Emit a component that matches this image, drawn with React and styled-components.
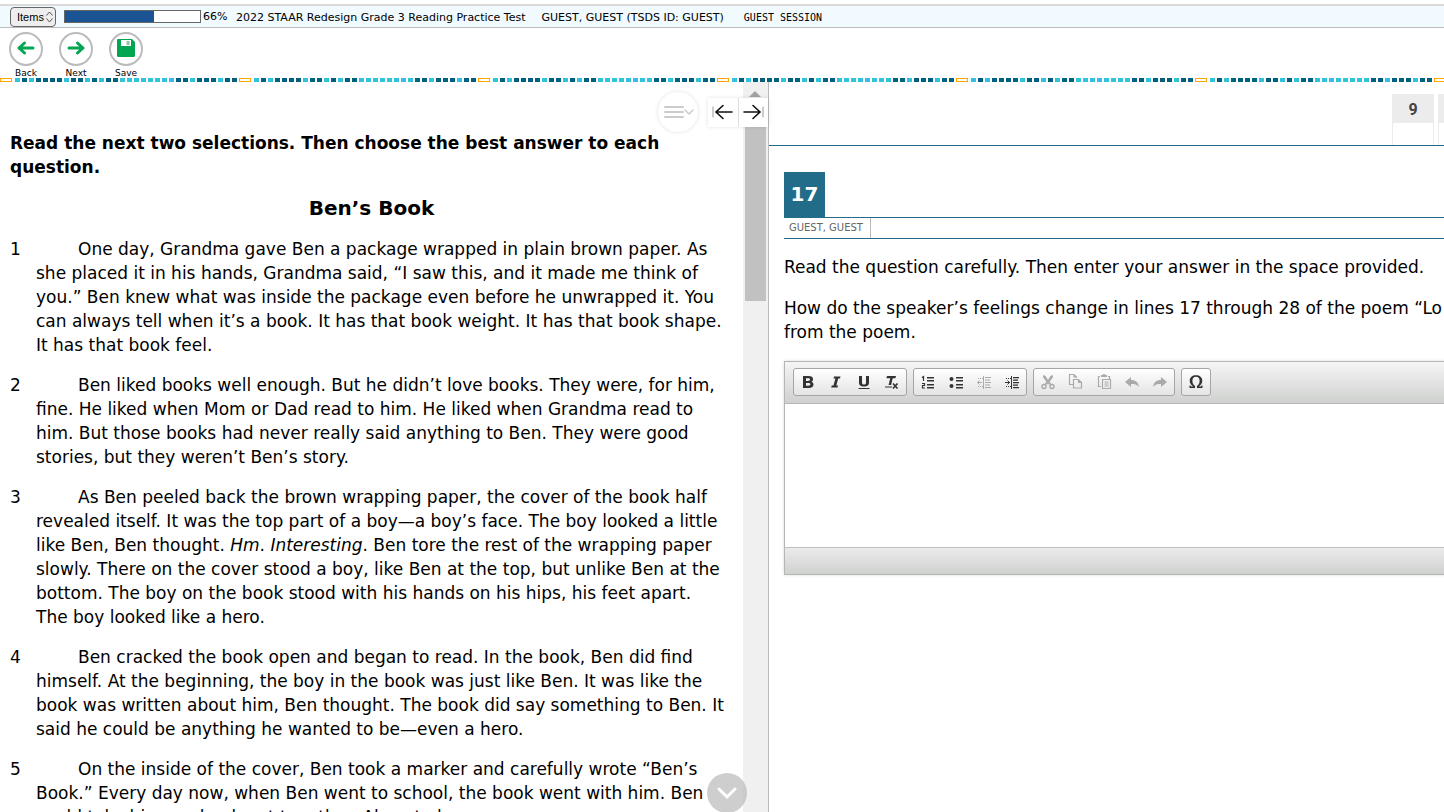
import styled, { createGlobalStyle, css } from "styled-components";

const SEGMENT = "LDLDDDDLDDLDLDDLLLLLLLLDDLDDDLDD".split("");

const PARAGRAPHS = [
  [
    "One day, Grandma gave Ben a package wrapped in plain brown paper. As",
    "she placed it in his hands, Grandma said, “I saw this, and it made me think of",
    "you.” Ben knew what was inside the package even before he unwrapped it. You",
    "can always tell when it’s a book. It has that book weight. It has that book shape.",
    "It has that book feel.",
  ],
  [
    "Ben liked books well enough. But he didn’t love books. They were, for him,",
    "fine. He liked when Mom or Dad read to him. He liked when Grandma read to",
    "him. But those books had never really said anything to Ben. They were good",
    "stories, but they weren’t Ben’s story.",
  ],
  [
    "As Ben peeled back the brown wrapping paper, the cover of the book half",
    "revealed itself. It was the top part of a boy—a boy’s face. The boy looked a little",
    <>like Ben, Ben thought. <em>Hm</em>. <em>Interesting</em>. Ben tore the rest of the wrapping paper</>,
    "slowly. There on the cover stood a boy, like Ben at the top, but unlike Ben at the",
    "bottom. The boy on the book stood with his hands on his hips, his feet apart.",
    "The boy looked like a hero.",
  ],
  [
    "Ben cracked the book open and began to read. In the book, Ben did find",
    "himself. At the beginning, the boy in the book was just like Ben. It was like the",
    "book was written about him, Ben thought. The book did say something to Ben. It",
    "said he could be anything he wanted to be—even a hero.",
  ],
  [
    "On the inside of the cover, Ben took a marker and carefully wrote “Ben’s",
    "Book.” Every day now, when Ben went to school, the book went with him. Ben",
    "could take his own book out together. Almost always",
  ],
];

const Arrow = ({ flip }) => (
  <svg width="20" height="20" viewBox="0 0 20 20" fill="none" stroke="#00a651" strokeWidth="3" strokeLinecap="round" strokeLinejoin="round">
    <path d={flip ? "M3 9H17M11.500 4L17 9L11.500 14" : "M17 9H3M8.500 4L3 9L8.500 14"} />
  </svg>
);

const Floppy = () => (
  <svg width="20" height="20" viewBox="0 0 20 20">
    <path d="M2 0H16L19 3V16.500Q19 18 17.500 18H2.500Q1 18 1 16.500V1Q1 0 2 0Z" fill="#00a651" />
    <path d="M5 1H15V7H5Z" fill="#fff" />
    <path d="M10.500 2H13.500V6H10.500Z" fill="#8bc79a" />
  </svg>
);

/* editor icons, all on a 16px grid */
const ICONS = {
  bold: <path fillRule="evenodd" d="M3 2H8.500C11.500 2 13 3.200 13 5.200C13 6.500 12.300 7.400 11.200 7.700C12.600 8 13.500 9 13.500 10.500C13.500 12.800 11.800 14 8.900 14H3ZM6 4.200V6.900H8C9.300 6.900 10 6.400 10 5.500C10 4.600 9.300 4.200 8.100 4.200ZM6 9V11.700H8.300C9.700 11.700 10.400 11.200 10.400 10.300C10.400 9.400 9.700 9 8.300 9Z" />,
  italic: <path d="M6 2.500H12.500L12 4.500H10.200L8.300 11.500H10L9.500 13.500H3.200L3.700 11.500H5.500L7.400 4.500H5.500Z" />,
  underline: <path d="M3 2H6V8.500C6 10 6.700 10.500 8 10.500C9.300 10.500 10 10 10 8.500V2H13V8.500C13 11.500 11 12.500 8 12.500C5 12.500 3 11.500 3 8.500ZM2.500 14H13.500V15H2.500Z" />,
  clear: (
    <>
      <path d="M3 2H12L11.400 4.300H8.700L7.100 11H4.600L6.200 4.300H2.400ZM1 12.500H8V13.500H1Z" />
      <path d="M9 9.500L13.500 14.500M13.500 9.500L9 14.500" stroke="currentColor" strokeWidth="1.700" />
    </>
  ),
  numbered: (
    <>
      <path d="M7 3H14V4.400H7ZM7 6H14V7.400H7ZM7 10H14V11.400H7ZM7 13H14V14.400H7Z" />
      <path d="M2 3.500L3.500 2.500V7M2 9.500H4.500V11.500H2.500V14H5" stroke="currentColor" strokeWidth="1.200" fill="none" />
    </>
  ),
  bullets: (
    <>
      <path d="M8 3H15V4.400H8ZM8 6H15V7.400H8ZM8 10H15V11.400H8ZM8 13H15V14.400H8Z" />
      <circle cx="3.500" cy="5" r="2" />
      <circle cx="3.500" cy="12" r="2" />
    </>
  ),
  outdent: (
    <>
      <path d="M7 2H8V15H7ZM9 3H15V4H9ZM9 5.500H14V6.500H9ZM9 8H15V9H9ZM9 10.500H14V11.500H9ZM9 13H15V14H9Z" />
      <path d="M6 8.500H1M3.500 6.500L1.500 8.500L3.500 10.500" fill="none" stroke="currentColor" />
      <path d="M2 4.500H7M2 12.500H7" fill="none" stroke="currentColor" strokeDasharray="1 1" />
    </>
  ),
  indent: (
    <>
      <path d="M7 2H8V15H7ZM9 3H15V4.300H9ZM9 5.500H14V6.800H9ZM9 8H15V9.300H9ZM9 10.500H14V11.800H9ZM9 13H15V14.300H9Z" />
      <path d="M1 8.500H6M3.500 6.500L5.500 8.500L3.500 10.500" fill="none" stroke="currentColor" />
      <path d="M2 4.500H7M2 12.500H7" fill="none" stroke="currentColor" strokeDasharray="1 1" />
    </>
  ),
  cut: (
    <>
      <path d="M3 1L5.500 2L8 6L10.500 2L13 1L13 3L9.500 8L12 10.500L10.500 11.500L8 9.500L5.500 11.500L4 10.500L6.500 8L3 3Z" />
      <circle cx="4" cy="12.500" r="2" fill="none" stroke="currentColor" strokeWidth="1.400" />
      <circle cx="12" cy="12.500" r="2" fill="none" stroke="currentColor" strokeWidth="1.400" />
    </>
  ),
  copy: <path d="M5 10.500H1.500V.500H6L8.500 3V4M6 .500V3H8.500M5.500 5.500H10.500L13.500 8.500V14H5.500ZM10.500 5.500V8.500H13.500" fill="none" stroke="currentColor" strokeWidth="1.200" />,
  paste: (
    <>
      <path d="M5 12.500H2.500V2.500H4M12 2.500H13.500V5M6.500 5.500H14.500V14.500H6.500ZM8.500 8H12.500M8.500 10H12.500M8.500 12H12.500" fill="none" stroke="currentColor" strokeWidth="1.200" />
      <path d="M5 1H6.500Q8 -1 9.500 1H11V3H5Z" />
    </>
  ),
  undo: <path d="M1 8L7 3V6C11.500 6 14.500 8.500 15 13C13 10.500 10.500 10 7 10V13Z" />,
  redo: <path d="M15 8L9 3V6C4.500 6 1.500 8.500 1 13C3 10.500 5.500 10 9 10V13Z" />,
  omega: <path d="M1.500 14V11.500H2.500L3 12.500H5.200C3 11 1.700 9.200 1.700 6.800C1.700 3.300 4.300 1.300 8 1.300C11.700 1.300 14.300 3.300 14.300 6.800C14.300 9.200 13 11 10.800 12.500H13L13.500 11.500H14.500V14H9V12C10.800 10.700 11.600 9.200 11.600 6.800C11.600 4.200 10.300 2.700 8 2.700C5.700 2.700 4.400 4.200 4.400 6.800C4.400 9.200 5.200 10.700 7 12V14Z" />,
};

const EDITOR_GROUPS = [
  [["bold", "Bold"], ["italic", "Italic"], ["underline", "Underline"], ["clear", "Remove Format"]],
  [["numbered", "Numbered List"], ["bullets", "Bulleted List"], ["outdent", "Decrease Indent", true], ["indent", "Increase Indent"]],
  [["cut", "Cut", true], ["copy", "Copy", true], ["paste", "Paste", true], ["undo", "Undo", true], ["redo", "Redo", true]],
  [["omega", "Insert Special Character"]],
];

const Passage = () => (
  <PassageBody>
    <Directions>
      Read the next two selections. Then choose the best answer to each
      <br />
      question.
    </Directions>
    <Title>Ben’s Book</Title>
    {PARAGRAPHS.map((lines, i) => (
      <Paragraph key={i}>
        <Num>{i + 1}</Num>
        <Lines>
          {lines.map((line, j) => (
            <Line key={j} $first={j === 0}>{line}</Line>
          ))}
        </Lines>
      </Paragraph>
    ))}
  </PassageBody>
);

const Editor = () => (
  <EditorBox>
    <EditorBar>
      {EDITOR_GROUPS.map((group, i) => (
        <Group key={i}>
          {group.map(([id, label, off]) => (
            <EditorButton key={id} type="button" aria-label={label} disabled={off}>
              <svg width="16" height="16" viewBox="0 0 16 16" fill="currentColor">{ICONS[id]}</svg>
            </EditorButton>
          ))}
        </Group>
      ))}
    </EditorBar>
    <Answer aria-label="Answer" />
    <EditorFooter />
  </EditorBox>
);

const App = () => {
  return (
    <>
      <GlobalStyle />
      <Page>
        <TopBar>
          <SelectWrap>
            <ItemSelect aria-label="Items" defaultValue="Items">
              <option>Items</option>
            </ItemSelect>
            <svg width="7" height="12" viewBox="0 0 7 12" fill="none" stroke="#555">
              <path d="M.500 4.500L3.500 1L6.500 4.500M.500 7.500L3.500 11L6.500 7.500" />
            </svg>
          </SelectWrap>
          <Progress><ProgressFill style={{ width: "66%" }} /></Progress>
          <Percent>66%</Percent>
          <TestName>2022 STAAR Redesign Grade 3 Reading Practice Test</TestName>
          <Student>GUEST, GUEST (TSDS ID: GUEST)</Student>
          <Session>GUEST SESSION</Session>
        </TopBar>

        <Tools>
          <Tool type="button"><Round><Arrow /></Round>Back</Tool>
          <Tool type="button"><Round><Arrow flip /></Round>Next</Tool>
          <Tool type="button"><Round><Floppy /></Round>Save</Tool>
        </Tools>

        <Stripe>
          {Array.from({ length: 14 }, (_, i) => (
            <Segment key={i}>
              <Dash />
              {SEGMENT.map((c, j) => <Dot key={j} $dark={c === "D"} />)}
            </Segment>
          ))}
        </Stripe>

        <Panes>
          <LeftPane>
            <Passage />
            <ScrollTrack>
              <svg width="12" height="6" viewBox="0 0 12 6"><path d="M0 6L6 0L12 6Z" fill="#a3a3a3" /></svg>
              <ScrollThumb />
            </ScrollTrack>
            <Floating>
              <MenuButton type="button" aria-label="Menu">
                <svg width="30" height="14" viewBox="0 0 30 14" fill="none" stroke="#ccc" strokeWidth="2" strokeLinecap="round">
                  <path d="M2 2H20M2 7H20M2 12H20" />
                  <path d="M22 5L26 9L30 5" strokeWidth="1.500" />
                </svg>
              </MenuButton>
              <Expanders>
                <Expander type="button" aria-label="Collapse left">
                  <svg width="22" height="16" viewBox="0 0 22 16" fill="none" stroke="#111" strokeWidth="1.600" strokeLinecap="round">
                    <path d="M1 3V13" stroke="#999" strokeWidth="1" />
                    <path d="M20 8H4M11 1.500L4 8L11 14.500" />
                  </svg>
                </Expander>
                <Expander type="button" aria-label="Expand right">
                  <svg width="22" height="16" viewBox="0 0 22 16" fill="none" stroke="#111" strokeWidth="1.600" strokeLinecap="round">
                    <path d="M21 3V13" stroke="#999" strokeWidth="1" />
                    <path d="M2 8H18M11 1.500L18 8L11 14.500" />
                  </svg>
                </Expander>
              </Expanders>
            </Floating>
            <DownButton type="button" aria-label="Scroll down">
              <svg width="20" height="12" viewBox="0 0 20 12" fill="none" stroke="#fff" strokeWidth="3" strokeLinecap="round">
                <path d="M2 2L10 10L18 2" />
              </svg>
            </DownButton>
          </LeftPane>

          <RightPane>
            <Tabs>
              <Tab><TabButton type="button">9</TabButton></Tab>
              <Tab><TabButton type="button" aria-label="Next item" /></Tab>
            </Tabs>
            <Question>
              <NumberRow><Badge>17</Badge></NumberRow>
              <GuestRow><GuestName>GUEST, GUEST</GuestName></GuestRow>
              <Prompts>
                <Prompt>Read the question carefully. Then enter your answer in the space provided.</Prompt>
                <Prompt>
                  How do the speaker’s feelings change in lines 17 through 28 of the poem “Lo
                  <br />
                  from the poem.
                </Prompt>
              </Prompts>
              <Editor />
            </Question>
          </RightPane>
        </Panes>
      </Page>
    </>
  );
};

export default App;

const sans = "Verdana, 'DejaVu Sans', sans-serif";

const GlobalStyle = createGlobalStyle`
  * {
    box-sizing: border-box;
  }

  body {
    margin: 0;
    background: #fff;
    color: #000;
    font-family: ${sans};
  }

  button {
    padding: 0;
    font-family: inherit;
    cursor: pointer;
  }

  svg {
    display: block;
    overflow: visible;
  }
`;

const Page = styled.div`
  display: flex;
  flex-direction: column;
  height: 100vh;
  padding-top: 4px;
  overflow: hidden;
`;

const TopBar = styled.header`
  display: flex;
  align-items: center;
  height: 24px;
  padding-left: 10px;
  background: #f0faff;
  border-top: 2px solid #dadada;
  border-bottom: 1px solid #bbb;
  font-size: 11px;
  white-space: nowrap;
`;

const SelectWrap = styled.div`
  position: relative;

  svg {
    position: absolute;
    right: 3px;
    top: 4px;
    pointer-events: none;
  }
`;

const ItemSelect = styled.select`
  display: block;
  appearance: none;
  width: 46px;
  height: 20px;
  padding: 0 0 0 6px;
  border: 1px solid #666;
  border-radius: 4px;
  background: #eee;
  color: #000;
  font-family: 'Liberation Sans', sans-serif;
  font-size: 11px;
`;

const Progress = styled.div`
  width: 137px;
  height: 13px;
  margin-left: 8px;
  border: 1px solid #666;
  background: #fff;
`;

const ProgressFill = styled.div`
  height: 100%;
  background: #1b5494;
`;

const Percent = styled.span`
  width: 33px;
  margin-left: 2px;
`;

const TestName = styled.span`
  padding-top: 2px;
  margin-right: 16px;
`;

const Student = styled.span`
  padding-top: 2px;
  margin-right: 20px;
`;

const Session = styled.span`
  padding-top: 2px;
  font-family: 'DejaVu Sans Mono', monospace;
  font-size: 10px;
`;

const Tools = styled.nav`
  display: flex;
  gap: 16px;
  height: 50px;
  padding: 4px 9px 0;
`;

const Tool = styled.button`
  display: flex;
  flex-direction: column;
  align-items: center;
  width: 34px;
  border: 0;
  background: none;
  color: #000;
  font-size: 9px;
  line-height: 14px;
`;

const Round = styled.span`
  display: grid;
  place-items: center;
  flex: none;
  width: 34px;
  height: 34px;
  border: 2px solid #bbb;
  border-radius: 50%;
  background: #fff;
`;

const Stripe = styled.div`
  display: flex;
  flex: none;
  height: 4px;
  overflow: hidden;
`;

const Segment = styled.div`
  display: flex;
  flex: none;
`;

const Dash = styled.span`
  width: 12px;
  height: 4px;
  margin-right: 3px;
  border: 1px solid #ffa500;
`;

const Dot = styled.span`
  width: 5px;
  height: 4px;
  margin-right: 2px;
  background: ${({ $dark }) => ($dark ? "#00607f" : "#31c3dd")};
`;

const Panes = styled.main`
  display: flex;
  flex: 1;
  min-height: 0;
`;

const LeftPane = styled.section`
  position: relative;
  display: flex;
  flex: none;
  width: 53.25%;
  border-right: 1px solid #bbb;
`;

const PassageBody = styled.article`
  flex: 1;
  min-width: 0;
  padding: 49px 0 0 10px;
  overflow: hidden;
  font-size: 17px;
  line-height: 24px;
  white-space: nowrap;
`;

const Directions = styled.p`
  margin: 0;
  font-weight: bold;
`;

const Title = styled.h1`
  margin: 16px 10px 16px 0;
  font-size: 20px;
  line-height: 26px;
  text-align: center;
`;

const Paragraph = styled.div`
  display: flex;
  margin-bottom: 16px;
`;

const Num = styled.span`
  flex: none;
  width: 26px;
`;

const Lines = styled.p`
  margin: 0;
`;

const Line = styled.span`
  display: block;
  ${({ $first }) => $first && css`
    padding-left: 42px;
  `}
`;

const ScrollTrack = styled.div`
  display: flex;
  flex-direction: column;
  flex: none;
  align-items: center;
  gap: 4px;
  width: 25px;
  padding-top: 9px;
  background: #f0f0f0;
`;

const ScrollThumb = styled.div`
  width: 21px;
  height: 200px;
  background: #c1c1c1;
`;

const Floating = styled.div`
  position: absolute;
  top: 10px;
  right: 0;
  display: flex;
  align-items: center;
  gap: 10px;
`;

const MenuButton = styled.button`
  display: grid;
  place-items: center;
  width: 40px;
  height: 40px;
  border: 0;
  border-radius: 50%;
  background: #fff;
  box-shadow: 0 0 4px rgba(0, 0, 0, 0.12);
`;

const Expanders = styled.div`
  display: flex;
  box-shadow: 0 0 4px rgba(0, 0, 0, 0.12);
`;

const Expander = styled.button`
  display: grid;
  place-items: center;
  width: 30px;
  height: 29px;
  border: 0;
  background: #fff;

  & + & {
    border-left: 1px solid #ddd;
  }
`;

const DownButton = styled.button`
  position: absolute;
  right: 21px;
  bottom: -1px;
  display: grid;
  place-items: center;
  width: 40px;
  height: 40px;
  border: 0;
  border-radius: 50%;
  background: rgba(190, 190, 190, 0.75);
`;

const RightPane = styled.section`
  flex: 1;
  min-width: 0;
  overflow: hidden;
`;

const Tabs = styled.div`
  display: flex;
  justify-content: flex-end;
  gap: 4px;
  height: 64px;
  margin-right: -36px;
  padding-top: 12px;
  border-bottom: 1px solid #226b89;
`;

const Tab = styled.div`
  width: 42px;
  border: 1px solid #ececec;
  border-bottom: 0;
`;

const TabButton = styled.button`
  display: block;
  width: 100%;
  height: 28px;
  border: 0;
  background: #ececec;
  color: #444;
  font-family: Roboto, sans-serif;
  font-size: 16px;
  font-weight: bold;
`;

const Question = styled.div`
  padding: 26px 0 0 15px;
`;

const NumberRow = styled.div`
  height: 46px;
  border-bottom: 1px solid #226b89;
`;

const Badge = styled.div`
  width: 41px;
  height: 45px;
  background: #226b89;
  color: #fff;
  font-size: 20px;
  font-weight: bold;
  line-height: 45px;
  text-align: center;
`;

const GuestRow = styled.div`
  display: flex;
  height: 21px;
  margin-bottom: 16px;
  border-bottom: 1px solid #226b89;
`;

const GuestName = styled.span`
  padding: 0 7px 0 5px;
  border-right: 1px solid #bbb;
  color: #666;
  font-size: 10px;
  line-height: 20px;
`;

const Prompts = styled.div`
  display: flex;
  flex-direction: column;
  gap: 17px;
  margin-bottom: 17px;
`;

const Prompt = styled.p`
  margin: 0;
  font-size: 17px;
  line-height: 24px;
  white-space: nowrap;
`;

const EditorBox = styled.div`
  margin-right: -10px;
  border: 1px solid #b6b6b6;
  box-shadow: 0 0 3px rgba(0, 0, 0, 0.15);
`;

const EditorBar = styled.div`
  display: flex;
  gap: 6px;
  height: 42px;
  padding: 6px 8px;
  border-bottom: 1px solid #b6b6b6;
  background: linear-gradient(#f5f5f5, #cfd1cf);
`;

const Group = styled.div`
  display: flex;
  height: 28px;
  border: 1px solid #a6a6a6;
  border-radius: 3px;
  background: linear-gradient(#fff, #e4e4e4);
`;

const EditorButton = styled.button`
  display: grid;
  place-items: center;
  width: 28px;
  border: 0;
  background: none;
  color: #333;

  &:disabled {
    color: #aaa;
  }
`;

const Answer = styled.textarea`
  display: block;
  width: 100%;
  height: 143px;
  border: 0;
  outline: 0;
  padding: 12px;
  resize: none;
  font-family: ${sans};
  font-size: 17px;
`;

const EditorFooter = styled.div`
  height: 27px;
  border-top: 1px solid #bfbfbf;
  background: linear-gradient(#ebebeb, #cfd1cf);
`;
